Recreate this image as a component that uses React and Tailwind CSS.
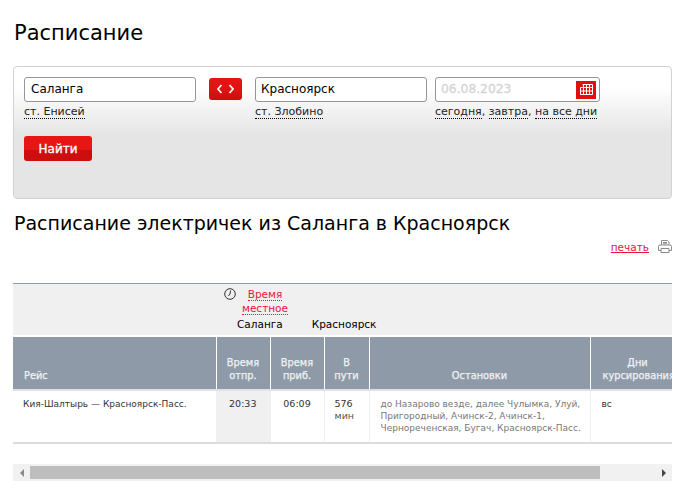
function Dotted({ children, className = "" }) {
  return <span className={"border-b border-dotted border-black " + className}>{children}</span>;
}
function Clock() {
  return (
    <svg width="12" height="12" viewBox="0 0 12 12" fill="none" stroke="#333" strokeWidth="1">
      <circle cx="6" cy="6" r="5.300" />
      <path d="M6.600 2.600 L6 6 L4.400 8" />
    </svg>
  );
}
function Printer() {
  return (
    <svg width="14" height="13" viewBox="0 0 14 13" fill="none" stroke="#8a8a8a" strokeWidth="1">
      <path d="M3.500 5V.5h6l1.500 1.500V5" />
      <path d="M.5 6.500 Q.5 5 2 5h10q1.500 0 1.500 1.500V10.500H11M3 10.500H.5V6.500" />
      <path d="M3 8.500h8v4H3z" />
      <path d="M5 2.500h4M5 3.800h4" />
    </svg>
  );
}
function CalendarGrid() {
  return (
    <svg width="14" height="11" viewBox="0 0 14 11" fill="none" stroke="#fff" strokeWidth="1">
      <path d="M3.500.5h10v10h-12v-7h12M1.500 7h12M4.500.5v10M7.500.5v10M10.500.5v10" />
    </svg>
  );
}
const th = "border-l border-white align-bottom text-center font-normal [-webkit-text-stroke:0.25px_#f0f2f4] text-[9.800px] leading-[13px] text-[#f0f2f4] pb-[7px] px-0";
export default function App() {
  return (
    <div className="w-[685px] h-[502px] overflow-hidden bg-white font-['DejaVu_Sans',Verdana,sans-serif] text-black flex flex-col pl-[13px] pr-[13px]">
      <h1 className="ml-[1px] text-[21px] leading-[26px] pt-[20px] font-normal">Расписание</h1>
      <div className="mt-[20px] h-[133px] border border-[#d2d2d2] rounded-[4px] bg-gradient-to-b from-white from-[15%] to-[#e5e5e5] to-[52%] pl-[10px] pt-[10px]">
        <div className="flex items-start">
          <div className="w-[172px]">
            <div className="h-[25px] border border-[#969696] rounded-[3px] bg-white pl-[6px] text-[12px] leading-[23px]">Саланга</div>
            <div className="mt-[3px] text-[11px] leading-[14px] text-[#222]"><Dotted className="inline-block leading-[13px]">ст. Енисей</Dotted></div>
          </div>
          <button className="ml-[13px] mt-[1px] w-[33px] h-[22px] rounded-[3px] bg-[linear-gradient(#e81414_0%,#e01212_55%,#c80e0e_100%)] flex items-center justify-center">
            <svg width="17" height="10" viewBox="0 0 17 10" fill="none" stroke="#fff" strokeWidth="1.700">
              <path d="M4.500 1 L1 5 L4.500 9M12.500 1 L16 5 L12.500 9" />
            </svg>
          </button>
          <div className="ml-[13px] w-[172px]">
            <div className="h-[25px] border border-[#969696] rounded-[3px] bg-white pl-[5px] text-[12px] leading-[23px]">Красноярск</div>
            <div className="mt-[3px] text-[11px] leading-[14px] text-[#222]"><Dotted className="inline-block leading-[13px]">ст. Злобино</Dotted></div>
          </div>
          <div className="ml-[8px] w-[165px]">
            <div className="h-[25px] border border-[#969696] rounded-[3px] bg-white pl-[5px] pr-[3px] flex items-center justify-between">
              <span className="text-[12.300px] text-[#d4d4d4] [-webkit-text-stroke:0.3px_#d4d4d4]">06.08.2023</span>
              <span className="w-[20px] h-[18px] bg-[#e01010] flex items-center justify-center"><CalendarGrid /></span>
            </div>
            <div className="mt-[3px] text-[11px] leading-[14px] whitespace-nowrap text-[#222]">
              <Dotted className="inline-block leading-[13px]">сегодня</Dotted>, <Dotted className="inline-block leading-[13px]">завтра</Dotted>, <Dotted className="inline-block leading-[13px]">на все дни</Dotted>
            </div>
          </div>
        </div>
        <button className="mt-[17px] w-[68px] h-[25px] rounded-[3px] bg-[linear-gradient(#e81515_0%,#e81515_55%,#cc0e0e_56%,#cc0e0e_100%)] text-white text-[12px] [-webkit-text-stroke:0.3px_white]">Найти</button>
      </div>
      <h2 className="ml-[1px] mt-[12px] text-[19px] leading-[24px] font-normal">Расписание электричек из Саланга в Красноярск</h2>
      <div className="mt-[4px] h-[15px] flex justify-end items-center gap-[9px]">
        <a className="text-[10.500px] leading-[14px] text-[#e8143c] underline">печать</a>
        <Printer />
      </div>
      <div className="mt-[29px] h-[52px] border-t border-[#8f9aa8] bg-[#f0f0f0] text-[10.500px] shrink-0">
        <div className="flex pl-[211px] pt-[4px]">
          <div className="mt-[0px]"><Clock /></div>
          <div className="w-[58px] text-center leading-[13.500px] text-[#e8143c]">
            <span className="border-b border-dotted border-[#e8143c]">Время</span> <span className="border-b border-dotted border-[#e8143c]">местное</span>
          </div>
        </div>
        <div className="flex pl-[224px] mt-[2px] leading-[14px]">
          <span>Саланга</span><span className="ml-[29px]">Красноярск</span>
        </div>
      </div>
      <div className="mt-[2px] w-[659px] overflow-hidden shrink-0">
        <table className="table-fixed border-collapse w-[680px]">
          <colgroup>
            <col className="w-[203px]" /><col className="w-[54px]" /><col className="w-[54px]" /><col className="w-[45px]" /><col className="w-[221px]" /><col className="w-[103px]" />
          </colgroup>
          <thead>
            <tr className="h-[53px] bg-[#8f9aa8]">
              <th className="align-bottom text-left font-normal [-webkit-text-stroke:0.25px_#f0f2f4] text-[9.800px] leading-[13px] text-[#f0f2f4] pl-[11px] pb-[7px]">Рейс</th>
              <th className={th}>Время<br />отпр.</th>
              <th className={th}>Время<br />приб.</th>
              <th className={th}>В<br />пути</th>
              <th className={th}>Остановки</th>
              <th className={th}><span className="block w-[70px] ml-[12px]">Дни<br />курсирования</span></th>
            </tr>
          </thead>
          <tbody>
            <tr className="h-[53px] border-t-2 border-b-2 border-t-[#dfe2e6] border-b-[#dcdcdc] align-top text-[9px] leading-[12px]">
              <td className="pl-[10px] pt-[7px] text-[#333] whitespace-nowrap">Кия-Шалтырь — Красноярск-Пасс.</td>
              <td className="bg-[#f0f0f0] text-center pt-[7px] text-[#333] text-[9.500px]">20:33</td>
              <td className="text-center pt-[7px] border-l border-[#eeeeee] text-[#333] text-[9.500px]">06:09</td>
              <td className="pl-[10px] pt-[7px] border-l border-[#eeeeee] text-[#333] text-[9.500px]">576<br /><span className="text-[#555]">мин</span></td>
              <td className="pl-[11px] pt-[7px] border-l border-[#eeeeee] text-[#777] whitespace-nowrap">до Назарово везде, далее Чулымка, Улуй,<br />Пригородный, Ачинск-2, Ачинск-1,<br />Чернореченская, Бугач, Красноярск-Пасс.</td>
              <td className="pl-[11px] pt-[7px] border-l border-[#eeeeee] text-[#333]">вс</td>
            </tr>
          </tbody>
        </table>
      </div>
      <div className="mt-[20px] h-[17px] bg-[#f1f1f1] flex items-center shrink-0">
        <div className="w-[17px] flex justify-center"><span className="border-y-[4px] border-y-transparent border-r-[4px] border-r-[#8a8a8a]" /></div>
        <div className="w-[570px] h-[13px] bg-[#bebebe]" />
        <div className="flex-1 flex justify-center pl-[56px]"><span className="border-y-[4px] border-y-transparent border-l-[4px] border-l-[#444]" /></div>
      </div>
    </div>
  );
}
